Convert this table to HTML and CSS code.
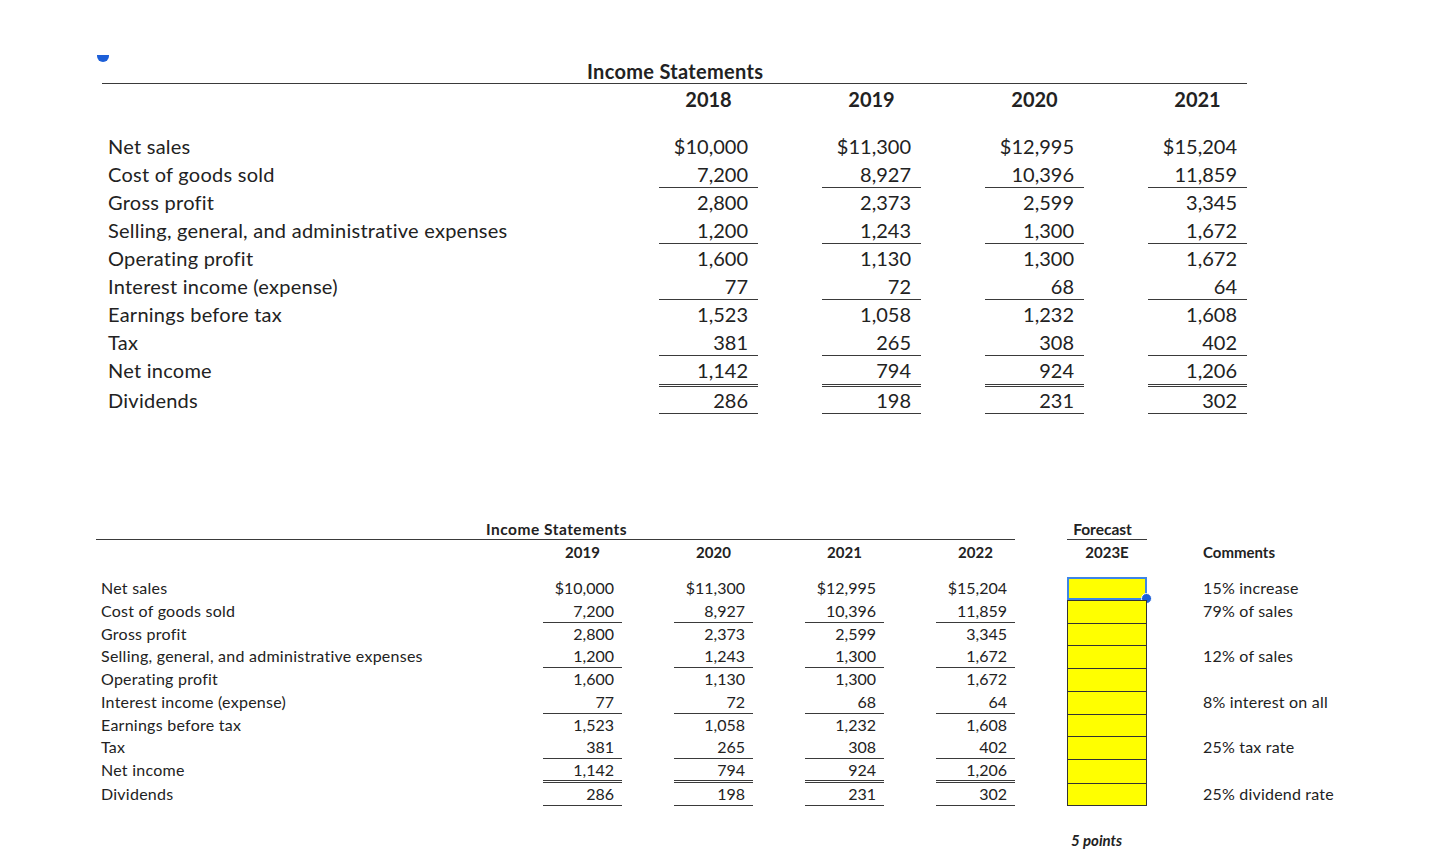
FILE: index.html
```html
<!DOCTYPE html>
<html lang="en">
<head>
<meta charset="utf-8">
<title>Income Statements</title>
<link rel="stylesheet" href="styles.css">
</head>
<body>
<main class="page">
  <span class="handle-top" aria-hidden="true"></span>

  <table class="is is-top">
    <colgroup>
      <col class="c-lab"><col class="c-num"><col class="c-num"><col class="c-num"><col class="c-num">
    </colgroup>
    <thead>
      <tr class="r-title">
        <th></th><th class="title">Income Statements</th><th></th><th></th><th></th>
      </tr>
      <tr class="r-year">
        <th></th>
        <th class="num"><div>2018</div></th>
        <th class="num"><div>2019</div></th>
        <th class="num"><div>2020</div></th>
        <th class="num"><div>2021</div></th>
      </tr>
      <tr class="r-gap"><th colspan="5"></th></tr>
    </thead>
    <tbody>
      <tr><td class="lab">Net sales</td><td class="num"><div>$10,000</div></td><td class="num"><div>$11,300</div></td><td class="num"><div>$12,995</div></td><td class="num"><div>$15,204</div></td></tr>
      <tr class="ul"><td class="lab">Cost of goods sold</td><td class="num"><div>7,200</div></td><td class="num"><div>8,927</div></td><td class="num"><div>10,396</div></td><td class="num"><div>11,859</div></td></tr>
      <tr><td class="lab">Gross profit</td><td class="num"><div>2,800</div></td><td class="num"><div>2,373</div></td><td class="num"><div>2,599</div></td><td class="num"><div>3,345</div></td></tr>
      <tr class="ul"><td class="lab">Selling, general, and administrative expenses</td><td class="num"><div>1,200</div></td><td class="num"><div>1,243</div></td><td class="num"><div>1,300</div></td><td class="num"><div>1,672</div></td></tr>
      <tr><td class="lab">Operating profit</td><td class="num"><div>1,600</div></td><td class="num"><div>1,130</div></td><td class="num"><div>1,300</div></td><td class="num"><div>1,672</div></td></tr>
      <tr class="ul"><td class="lab">Interest income (expense)</td><td class="num"><div>77</div></td><td class="num"><div>72</div></td><td class="num"><div>68</div></td><td class="num"><div>64</div></td></tr>
      <tr><td class="lab">Earnings before tax</td><td class="num"><div>1,523</div></td><td class="num"><div>1,058</div></td><td class="num"><div>1,232</div></td><td class="num"><div>1,608</div></td></tr>
      <tr class="ul"><td class="lab">Tax</td><td class="num"><div>381</div></td><td class="num"><div>265</div></td><td class="num"><div>308</div></td><td class="num"><div>402</div></td></tr>
      <tr class="dl"><td class="lab">Net income</td><td class="num"><div>1,142</div></td><td class="num"><div>794</div></td><td class="num"><div>924</div></td><td class="num"><div>1,206</div></td></tr>
      <tr class="ul"><td class="lab">Dividends</td><td class="num"><div>286</div></td><td class="num"><div>198</div></td><td class="num"><div>231</div></td><td class="num"><div>302</div></td></tr>
    </tbody>
  </table>

  <table class="is is-bottom">
    <colgroup>
      <col class="c-lab"><col class="c-num"><col class="c-num"><col class="c-num"><col class="c-num"><col class="c-fc"><col class="c-cm">
    </colgroup>
    <thead>
      <tr class="r-title">
        <th class="line"></th><th class="title line">Income Statements</th><th class="line"></th><th class="line"></th><th class="line"></th>
        <th class="fc"><div class="fc-title">Forecast</div></th><th></th>
      </tr>
      <tr class="r-year">
        <th></th>
        <th class="num"><div>2019</div></th>
        <th class="num"><div>2020</div></th>
        <th class="num"><div>2021</div></th>
        <th class="num"><div>2022</div></th>
        <th class="fc"><div class="fc-year">2023E</div></th>
        <th class="cm">Comments</th>
      </tr>
      <tr class="r-gap"><th colspan="7"></th></tr>
    </thead>
    <tbody>
      <tr><td class="lab">Net sales</td><td class="num"><div>$10,000</div></td><td class="num"><div>$11,300</div></td><td class="num"><div>$12,995</div></td><td class="num"><div>$15,204</div></td><td class="fc"><div class="cell selected"><span class="dot"></span></div></td><td class="cm">15% increase</td></tr>
      <tr class="ul"><td class="lab">Cost of goods sold</td><td class="num"><div>7,200</div></td><td class="num"><div>8,927</div></td><td class="num"><div>10,396</div></td><td class="num"><div>11,859</div></td><td class="fc"><div class="cell"></div></td><td class="cm">79% of sales</td></tr>
      <tr><td class="lab">Gross profit</td><td class="num"><div>2,800</div></td><td class="num"><div>2,373</div></td><td class="num"><div>2,599</div></td><td class="num"><div>3,345</div></td><td class="fc"><div class="cell"></div></td><td class="cm"></td></tr>
      <tr class="ul"><td class="lab">Selling, general, and administrative expenses</td><td class="num"><div>1,200</div></td><td class="num"><div>1,243</div></td><td class="num"><div>1,300</div></td><td class="num"><div>1,672</div></td><td class="fc"><div class="cell"></div></td><td class="cm">12% of sales</td></tr>
      <tr><td class="lab">Operating profit</td><td class="num"><div>1,600</div></td><td class="num"><div>1,130</div></td><td class="num"><div>1,300</div></td><td class="num"><div>1,672</div></td><td class="fc"><div class="cell"></div></td><td class="cm"></td></tr>
      <tr class="ul"><td class="lab">Interest income (expense)</td><td class="num"><div>77</div></td><td class="num"><div>72</div></td><td class="num"><div>68</div></td><td class="num"><div>64</div></td><td class="fc"><div class="cell"></div></td><td class="cm">8% interest on all</td></tr>
      <tr><td class="lab">Earnings before tax</td><td class="num"><div>1,523</div></td><td class="num"><div>1,058</div></td><td class="num"><div>1,232</div></td><td class="num"><div>1,608</div></td><td class="fc"><div class="cell"></div></td><td class="cm"></td></tr>
      <tr class="ul"><td class="lab">Tax</td><td class="num"><div>381</div></td><td class="num"><div>265</div></td><td class="num"><div>308</div></td><td class="num"><div>402</div></td><td class="fc"><div class="cell"></div></td><td class="cm">25% tax rate</td></tr>
      <tr class="dl"><td class="lab">Net income</td><td class="num"><div>1,142</div></td><td class="num"><div>794</div></td><td class="num"><div>924</div></td><td class="num"><div>1,206</div></td><td class="fc"><div class="cell"></div></td><td class="cm"></td></tr>
      <tr class="ul"><td class="lab">Dividends</td><td class="num"><div>286</div></td><td class="num"><div>198</div></td><td class="num"><div>231</div></td><td class="num"><div>302</div></td><td class="fc"><div class="cell last"></div></td><td class="cm">25% dividend rate</td></tr>
    </tbody>
    <tfoot>
      <tr class="r-points"><td colspan="5"></td><td class="fc"><div class="points">5 points</div></td><td></td></tr>
    </tfoot>
  </table>
</main>
</body>
</html>
```

FILE: styles.css
```css
* { box-sizing: border-box; }

html, body {
  margin: 0;
  padding: 0;
  background: #ffffff;
}

body {
  font-family: Lato, "Open Sans", "Liberation Sans", sans-serif;
  color: #222222;
  width: 1443px;
  height: 856px;
  overflow: hidden;
}

.page {
  position: relative;
  padding-top: 60px;
}

.handle-top {
  position: absolute;
  left: 97px;
  top: 55px;
  width: 12px;
  height: 7px;
  background: #1d5fd8;
  border-radius: 0 0 6px 6px;
}

.is {
  border-collapse: separate;
  border-spacing: 0;
  table-layout: fixed;
}

.is th, .is td {
  padding: 0;
  font-weight: normal;
  text-align: left;
  white-space: nowrap;
}

.is .title { text-align: left; font-weight: bold; }

.is .num div {
  text-align: right;
  border-bottom: 1px solid transparent;
}

.is .r-year .num div { text-align: center; font-weight: bold; }

.is tr.ul .num div { border-bottom: 1px solid #3a3a3a; }
.is tr.dl .num div { border-bottom: 3px double #3a3a3a; }

/* ---------- top statement ---------- */
.is-top {
  margin-left: 102px;
  width: 1145px;
  font-size: 20px;
}

.is-top .c-lab { width: 493px; }
.is-top .c-num { width: 163px; }

.is-top .r-title th {
  height: 24px;
  line-height: 23px;
  vertical-align: top;
  border-bottom: 1px solid #3a3a3a;
}
.is-top .r-title .title { letter-spacing: 0.3px; text-indent: -8px; }

.is-top .r-year th { height: 31px; vertical-align: top; }
.is-top .r-year .num div { line-height: 31px; border: 0; padding-right: 0; }
.is-top .r-gap th { height: 18px; }

.is-top .lab {
  padding-left: 6px;
  height: 28px;
  line-height: 27px;
  vertical-align: top;
  letter-spacing: 0.25px;
}

.is-top .num { padding-left: 64px; vertical-align: top; }
.is-top .num div {
  height: 27px;
  line-height: 27px;
  padding-right: 10px;
}
.is-top tr.dl .num div { height: 30px; }
.is-top tr.dl .lab { height: 30px; }

/* ---------- bottom statement ---------- */
.is-bottom {
  margin-left: 96px;
  margin-top: 105px;
  width: 1347px;
  font-size: 16px;
}

.is-bottom .c-lab { width: 395px; }
.is-bottom .c-num { width: 131px; }
.is-bottom .c-fc  { width: 132px; }
.is-bottom .c-cm  { width: 300px; }

.is-bottom .r-title th {
  height: 20px;
  line-height: 18px;
  vertical-align: top;
  font-size: 15.5px;
}
.is-bottom .r-title .title { letter-spacing: 0.5px; text-indent: -5px; }
.is-bottom .r-title th.line { border-bottom: 1px solid #3a3a3a; }

.is-bottom .fc { padding-left: 52px; vertical-align: top; }
.is-bottom .fc-title {
  width: 80px;
  height: 20px;
  line-height: 18px;
  padding-right: 9px;
  text-align: center;
  font-weight: bold;
  border-bottom: 1px solid #3a3a3a;
}
.is-bottom .fc-year {
  width: 80px;
  text-align: center;
  font-weight: bold;
  line-height: 25px;
}

.is-bottom .r-year th { height: 25px; vertical-align: top; font-size: 15px; }
.is-bottom .r-year .num div { line-height: 25px; padding-right: 0; border: 0; }
.is-bottom .r-year .cm { font-weight: bold; line-height: 25px; padding-left: 56px; }
.is-bottom .r-gap th { height: 12px; }

.is-bottom .lab {
  padding-left: 5px;
  height: 22.75px;
  line-height: 22.75px;
  vertical-align: top;
  letter-spacing: 0.25px;
}

.is-bottom .num { padding-left: 52px; vertical-align: top; }
.is-bottom .num div {
  height: 22.75px;
  line-height: 21.75px;
  padding-right: 8px;
}
.is-bottom tr.dl .num div { height: 24px; line-height: 21px; }
.is-bottom tr.dl .lab { height: 24px; line-height: 22px; }

.is-bottom tbody .cm {
  padding-left: 56px;
  line-height: 22.75px;
  vertical-align: top;
  letter-spacing: 0.2px;
}

.cell {
  position: relative;
  width: 80px;
  height: 22.75px;
  background: #ffff00;
  border: 1px solid #333333;
  border-bottom: 0;
}
.is-bottom tr.dl .cell { height: 24px; }
.cell.last { border-bottom: 1px solid #333333; }

.cell.selected {
  border: 2px solid #3d86e6;
}

.dot {
  position: absolute;
  right: -7px;
  bottom: -6px;
  width: 11px;
  height: 11px;
  border-radius: 50%;
  background: #1d5fd8;
  border: 1px solid #ffffff;
}

.is-bottom .r-points .fc { padding-top: 23px; }
.points {
  padding-left: 4px;
  font-weight: bold;
  font-style: italic;
  font-size: 15px;
  line-height: 22px;
}
```
